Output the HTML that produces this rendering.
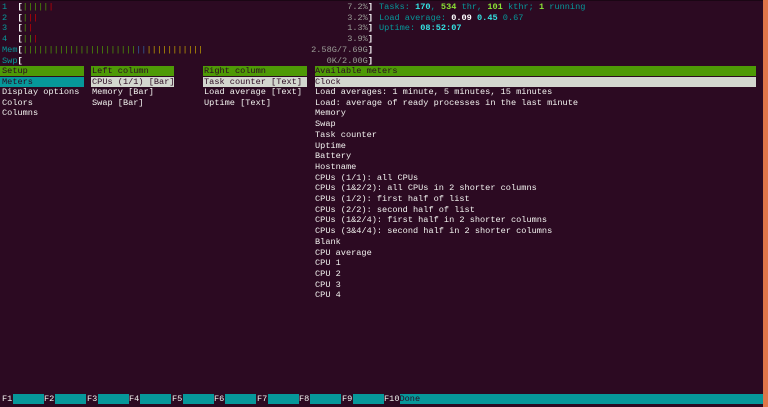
<!DOCTYPE html>
<html><head><meta charset="utf-8"><style>
html,body{margin:0;padding:0;}
body{width:768px;height:407px;background:#2c0a22;position:relative;overflow:hidden;font-family:"Liberation Mono","DejaVu Sans Mono",monospace;font-size:8.6px;color:#f2f2ef;}
.r{position:absolute;white-space:pre;line-height:10.7px;height:10.7px;}
.t{color:#06989a}.g{color:#4e9a06}.rd{color:#cc0000}.gy{color:#9a9c96}.w{color:#fff;font-weight:bold}
.b{color:#3465a4}.o{color:#c4a000}.tb{color:#34e2e2;font-weight:bold}.gb{color:#8ae234;font-weight:bold}
.bar{position:absolute;height:10px;}
</style></head><body>
<div style="position:absolute;left:0;top:0;width:768px;height:1px;background:#1a0614"></div>
<div style="position:absolute;left:763px;top:0;width:5px;height:407px;background:#e0764a"></div>

<div class="r" style="left:2px;top:2px"><span class="t">1</span>  <span class="w">[</span><span class="g">|||||</span><span class="rd">|</span></div>
<div class="r" style="left:2px;top:12.7px"><span class="t">2</span>  <span class="w">[</span><span class="g">|</span><span class="rd">||</span></div>
<div class="r" style="left:2px;top:23.4px"><span class="t">3</span>  <span class="w">[</span><span class="g">|</span><span class="rd">|</span></div>
<div class="r" style="left:2px;top:34.1px"><span class="t">4</span>  <span class="w">[</span><span class="g">||</span><span class="rd">|</span></div>
<div class="r" style="left:2px;top:44.8px"><span class="t">Mem</span><span class="w">[</span><span class="g">||||||||||||||||||||||</span><span class="b">||</span><span class="o">|||||||||||</span></div>
<div class="r" style="left:2px;top:55.5px"><span class="t">Swp</span><span class="w">[</span></div>

<div class="r" style="right:395px;top:2px"><span class="gy">7.2%</span><span class="w">]</span></div>
<div class="r" style="right:395px;top:12.7px"><span class="gy">3.2%</span><span class="w">]</span></div>
<div class="r" style="right:395px;top:23.4px"><span class="gy">1.3%</span><span class="w">]</span></div>
<div class="r" style="right:395px;top:34.1px"><span class="gy">3.9%</span><span class="w">]</span></div>
<div class="r" style="right:395px;top:44.8px"><span class="gy">2.58G/7.69G</span><span class="w">]</span></div>
<div class="r" style="right:395px;top:55.5px"><span class="gy">0K/2.00G</span><span class="w">]</span></div>

<div class="r" style="left:379px;top:2px"><span class="t">Tasks: </span><span class="tb">170</span><span class="t">, </span><span class="gb">534</span><span class="t"> thr, </span><span class="gb">101</span><span class="t"> kthr; </span><span class="gb">1</span><span class="t"> running</span></div>
<div class="r" style="left:379px;top:12.7px"><span class="t">Load average: </span><span class="w">0.09 </span><span class="tb">0.45 </span><span class="t">0.67</span></div>
<div class="r" style="left:379px;top:23.4px"><span class="t">Uptime: </span><span class="tb">08:52:07</span></div>

<div class="bar" style="left:0;top:66px;width:84px;background:#4e9a06"></div>
<div class="bar" style="left:91px;top:66px;width:83px;background:#4e9a06"></div>
<div class="bar" style="left:203px;top:66px;width:104px;background:#4e9a06"></div>
<div class="bar" style="left:315px;top:66px;width:441px;background:#4e9a06"></div>
<div class="bar" style="left:0;top:76.5px;width:84px;background:#06989a"></div>
<div class="bar" style="left:91px;top:76.5px;width:83px;background:#d3d7cf"></div>
<div class="bar" style="left:203px;top:76.5px;width:104px;background:#d3d7cf"></div>
<div class="bar" style="left:315px;top:76.5px;width:441px;background:#d3d7cf"></div>

<div class="r" style="left:2px;top:66px;color:#2c0a22;height:auto">Setup
Meters</div>
<div class="r" style="left:2px;top:87px;height:auto">Display options
Colors
Columns</div>
<div class="r" style="left:92px;top:66px;color:#2c0a22;height:auto">Left column
CPUs (1/1) [Bar]</div>
<div class="r" style="left:92px;top:87px;height:auto">Memory [Bar]
Swap [Bar]</div>
<div class="r" style="left:204px;top:66px;color:#2c0a22;height:auto">Right column
Task counter [Text]</div>
<div class="r" style="left:204px;top:87px;height:auto">Load average [Text]
Uptime [Text]</div>
<div class="r" style="left:315px;top:66px;color:#2c0a22;height:auto">Available meters
Clock</div>
<div class="r" style="left:315px;top:87px;height:auto">Load averages: 1 minute, 5 minutes, 15 minutes
Load: average of ready processes in the last minute
Memory
Swap
Task counter
Uptime
Battery
Hostname
CPUs (1/1): all CPUs
CPUs (1&amp;2/2): all CPUs in 2 shorter columns
CPUs (1/2): first half of list
CPUs (2/2): second half of list
CPUs (1&amp;2/4): first half in 2 shorter columns
CPUs (3&amp;4/4): second half in 2 shorter columns
Blank
CPU average
CPU 1
CPU 2
CPU 3
CPU 4</div>

<div class="bar" style="left:13px;top:394px;width:31px;background:#06989a"></div>
<div class="bar" style="left:55px;top:394px;width:31px;background:#06989a"></div>
<div class="bar" style="left:98px;top:394px;width:31px;background:#06989a"></div>
<div class="bar" style="left:140px;top:394px;width:31px;background:#06989a"></div>
<div class="bar" style="left:183px;top:394px;width:31px;background:#06989a"></div>
<div class="bar" style="left:225px;top:394px;width:31px;background:#06989a"></div>
<div class="bar" style="left:268px;top:394px;width:31px;background:#06989a"></div>
<div class="bar" style="left:310px;top:394px;width:31px;background:#06989a"></div>
<div class="bar" style="left:353px;top:394px;width:31px;background:#06989a"></div>
<div class="bar" style="left:400px;top:394px;width:363px;background:#06989a"></div>
<div class="r" style="left:2px;top:394px">F1</div>
<div class="r" style="left:44px;top:394px">F2</div>
<div class="r" style="left:87px;top:394px">F3</div>
<div class="r" style="left:129px;top:394px">F4</div>
<div class="r" style="left:172px;top:394px">F5</div>
<div class="r" style="left:214px;top:394px">F6</div>
<div class="r" style="left:257px;top:394px">F7</div>
<div class="r" style="left:299px;top:394px">F8</div>
<div class="r" style="left:342px;top:394px">F9</div>
<div class="r" style="left:384px;top:394px">F10<span style="color:#2c0a22">Done</span></div>
</body></html>
